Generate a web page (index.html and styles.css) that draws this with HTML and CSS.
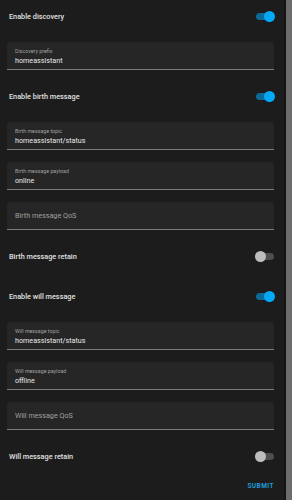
FILE: index.html
```html
<!DOCTYPE html>
<html lang="en">
<head>
    <meta charset="UTF-8">
    <meta name="viewport" content="width=device-width, initial-scale=1.0">
    <title>MQTT options</title>
    <link rel="stylesheet" href="styles.css">
</head>
<body>
    <div class="page">
        <div class="main">
            <div class="form">
                <div class="row">
                    <span class="row-label">Enable discovery</span>
                    <span class="switch on"><span class="thumb"></span></span>
                </div>
                <div class="field">
                    <div class="field-label">Discovery prefix</div>
                    <div class="field-value">homeassistant</div>
                </div>
                <div class="row">
                    <span class="row-label">Enable birth message</span>
                    <span class="switch on"><span class="thumb"></span></span>
                </div>
                <div class="field">
                    <div class="field-label">Birth message topic</div>
                    <div class="field-value">homeassistant/status</div>
                </div>
                <div class="field">
                    <div class="field-label">Birth message payload</div>
                    <div class="field-value">online</div>
                </div>
                <div class="field empty">
                    <div class="placeholder">Birth message QoS</div>
                </div>
                <div class="row">
                    <span class="row-label">Birth message retain</span>
                    <span class="switch"><span class="thumb"></span></span>
                </div>
                <div class="row">
                    <span class="row-label">Enable will message</span>
                    <span class="switch on"><span class="thumb"></span></span>
                </div>
                <div class="field">
                    <div class="field-label">Will message topic</div>
                    <div class="field-value">homeassistant/status</div>
                </div>
                <div class="field">
                    <div class="field-label">Will message payload</div>
                    <div class="field-value">offline</div>
                </div>
                <div class="field empty">
                    <div class="placeholder">Will message QoS</div>
                </div>
                <div class="row">
                    <span class="row-label">Will message retain</span>
                    <span class="switch"><span class="thumb"></span></span>
                </div>
                <div class="actions">
                    <button class="submit">SUBMIT</button>
                </div>
            </div>
        </div>
        <div class="scrollbar"></div>
    </div>
</body>
</html>
```

FILE: styles.css
```css
html, body {
    margin: 0;
    height: 100%;
}
body {
    font-family: Roboto, "Liberation Sans", sans-serif;
    background-color: #1c1c1c;
    color: #e1e1e1;
    overflow: hidden;
}
.page {
    display: flex;
    height: 500px;
}
.main {
    flex: 1;
    padding: 0 10px 0 7px;
}
.form {
    display: flex;
    flex-direction: column;
    margin-top: -4px;
}
.row {
    display: flex;
    align-items: center;
    justify-content: space-between;
    height: 40px;
    padding-left: 2px;
}
.field + .row {
    margin-top: 6px;
}
.row + .field {
    margin-top: 6px;
}
.field + .field {
    margin-top: 12px;
}
.row-label {
    font-size: 7.3px;
    font-weight: 500;
    color: #e1e1e1;
}
.switch {
    position: relative;
    width: 18px;
    height: 7px;
    border-radius: 4px;
    background-color: #4e4e4e;
    margin-right: 0;
}
.switch .thumb {
    position: absolute;
    top: -2px;
    left: -1px;
    width: 11px;
    height: 11px;
    border-radius: 50%;
    background-color: #bdbdbd;
}
.switch.on {
    background-color: #0d6a98;
}
.switch.on .thumb {
    left: 8px;
    background-color: #03a9f4;
}
.field {
    height: 28px;
    box-sizing: border-box;
    background-color: #262626;
    border-bottom: 1px solid #7c7c7c;
    border-radius: 3px 3px 0 0;
    padding: 6px 8px 0 8px;
}
.field-label {
    font-size: 5.3px;
    line-height: 7px;
    color: #a0a0a0;
}
.field-value {
    font-size: 7.2px;
    line-height: 11px;
    color: #e6e6e6;
}
.field.empty {
    display: flex;
    align-items: center;
    padding-top: 0;
}
.placeholder {
    font-size: 7.2px;
    color: #a0a0a0;
}
.actions {
    display: flex;
    justify-content: flex-end;
    height: 20px;
    align-items: center;
}
.submit {
    background: none;
    border: none;
    padding: 0;
    font-family: inherit;
    font-size: 6.4px;
    font-weight: 700;
    letter-spacing: 0.5px;
    color: #1e9fdc;
    cursor: pointer;
}
.scrollbar {
    width: 6px;
    border-left: 2px solid #141414;
    background-color: #6c6c6c;
}
```
